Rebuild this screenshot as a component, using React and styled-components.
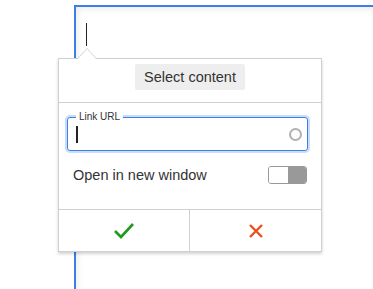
import React from 'react';
import styled, { createGlobalStyle } from 'styled-components';

const Global = createGlobalStyle`
  html, body {
    margin: 0;
    padding: 0;
    background: #fff;
    font-family: "Liberation Sans", Arial, sans-serif;
  }
`;

const Page = styled.div`
  position: relative;
  width: 373px;
  height: 289px;
  overflow: hidden;
`;

const Editor = styled.div`
  margin: 5px 0 0 74px;
  height: 300px;
  border-top: 2px solid #3d7fe6;
  border-left: 2px solid #3d7fe6;
  box-shadow: inset 2px 2px 6px rgba(0, 0, 0, 0.08);
  padding: 16px 0 0 10px;
`;

const Caret = styled.div`
  width: 1px;
  height: 23px;
  background: #222;
`;

const Popup = styled.div`
  position: absolute;
  top: 58px;
  left: 58px;
  width: 262px;
  background: #fff;
  border: 1px solid #d0d0d0;
  box-shadow: 0 2px 3px rgba(0, 0, 0, 0.18);

  &::before,
  &::after {
    content: '';
    position: absolute;
    left: 18px;
    border: 10px solid transparent;
    border-top: 0;
  }
  &::before {
    top: -11px;
    border-bottom: 11px solid #d0d0d0;
  }
  &::after {
    top: -10px;
    border-bottom: 11px solid #fff;
  }
`;

const Header = styled.div`
  display: flex;
  justify-content: center;
  padding: 5px 0 12px;
  border-bottom: 1px solid #d0d0d0;
`;

const SelectButton = styled.button`
  height: 26px;
  padding: 0 9px;
  border: 0;
  border-radius: 2px;
  background: #eeeeee;
  color: #333;
  font: 14.5px "Liberation Sans", Arial, sans-serif;
`;

const Form = styled.div`
  padding: 14px 13px 25px 8px;
  border-bottom: 1px solid #d0d0d0;
`;

const Field = styled.div`
  position: relative;
  display: flex;
  align-items: center;
  height: 32px;
  border: 1px solid #3d7fe6;
  border-radius: 3px;
  box-shadow: 0 0 0 2px #c9ddfb;
  padding: 0 5px 0 8px;
`;

const Legend = styled.span`
  position: absolute;
  top: -7px;
  left: 8px;
  padding: 0 3px;
  background: #fff;
  color: #333;
  font-size: 10px;
  line-height: 12px;
`;

const TextCaret = styled.div`
  width: 2px;
  height: 17px;
  background: #222;
`;

const Spinner = styled.span`
  margin-left: auto;
  width: 9px;
  height: 9px;
  border: 2px solid #b0b0b0;
  border-radius: 50%;
`;

const OptionRow = styled.div`
  display: flex;
  align-items: center;
  justify-content: space-between;
  margin-top: 15px;
  padding-left: 6px;
  color: #333;
  font-size: 14.5px;
`;

const Toggle = styled.div`
  display: flex;
  width: 37px;
  height: 16px;
  border: 1px solid #999;
  border-radius: 3px;
  overflow: hidden;
  margin-right: 1px;
`;

const Half = styled.span`
  flex: 1;
  background: ${(p) => (p.on ? '#999' : '#fff')};
`;

const Footer = styled.div`
  display: grid;
  grid-template-columns: 130px 1fr;
  height: 41px;
`;

const Action = styled.button`
  display: flex;
  align-items: center;
  justify-content: center;
  border: 0;
  background: #fff;
  border-left: ${(p) => (p.divided ? '1px solid #d0d0d0' : '0')};
  padding: 0;
`;

export default function App() {
  return (
    <Page>
      <Global />
      <Editor>
        <Caret />
      </Editor>
      <Popup>
        <Header>
          <SelectButton>Select content</SelectButton>
        </Header>
        <Form>
          <Field>
            <Legend>Link URL</Legend>
            <TextCaret />
            <Spinner />
          </Field>
          <OptionRow>
            <span>Open in new window</span>
            <Toggle>
              <Half />
              <Half on />
            </Toggle>
          </OptionRow>
        </Form>
        <Footer>
          <Action>
            <svg width="22" height="18" viewBox="0 0 22 18">
              <polyline points="2,9 8,15 20,2" fill="none" stroke="#1f9a1f" strokeWidth="2.6" />
            </svg>
          </Action>
          <Action divided>
            <svg width="16" height="16" viewBox="0 0 16 16">
              <path d="M2 2 L14 14 M14 2 L2 14" stroke="#e8511f" strokeWidth="2.4" />
            </svg>
          </Action>
        </Footer>
      </Popup>
    </Page>
  );
}
